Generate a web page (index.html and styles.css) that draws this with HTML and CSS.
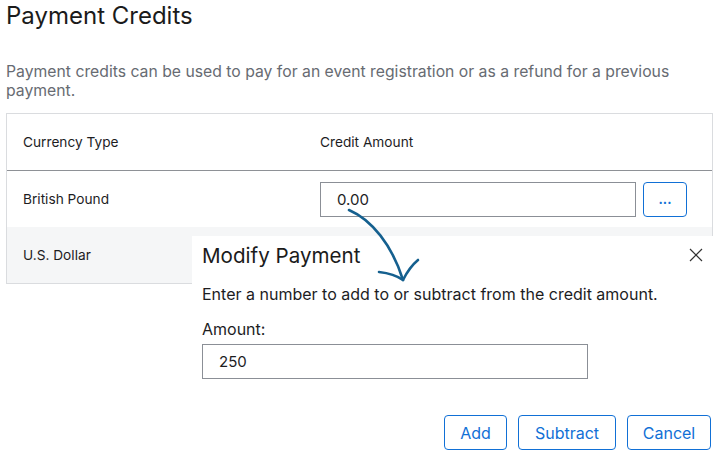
FILE: index.html
```html
<!DOCTYPE html>
<html>
<head>
<meta charset="utf-8">
<link rel="stylesheet" href="styles.css">
</head>
<body>
<div class="page">
  <h1 class="title">Payment Credits</h1>
  <p class="desc">Payment credits can be used to pay for an event registration or as a refund for a previous payment.</p>
  <div class="table">
    <div class="row head">
      <div class="c1">Currency Type</div>
      <div class="c2">Credit Amount</div>
    </div>
    <div class="row">
      <div class="c1">British Pound</div>
      <div class="c2 amount">
        <div class="field">0.00</div>
        <button class="dots">...</button>
      </div>
    </div>
    <div class="row alt">
      <div class="c1">U.S. Dollar</div>
      <div class="c2"></div>
    </div>
  </div>
</div>

<div class="modal">
  <div class="modal-head">
    <span class="modal-title">Modify Payment</span>
    <svg class="close" width="14" height="14" viewBox="0 0 14 14"><path d="M1 1L13 13M13 1L1 13" stroke="#333" stroke-width="1.2" fill="none"/></svg>
  </div>
  <p class="modal-text">Enter a number to add to or subtract from the credit amount.</p>
  <label class="label">Amount:</label>
  <div class="field modal-field">250</div>
  <div class="actions">
    <button class="btn btn-add">Add</button>
    <button class="btn btn-sub">Subtract</button>
    <button class="btn btn-cancel">Cancel</button>
  </div>
</div>

<svg class="arrow" width="720" height="461" viewBox="0 0 720 461">
  <path d="M349 210 C 372 220, 392 245, 403 280" stroke="#15608f" stroke-width="2.6" fill="none" stroke-linecap="round"/>
  <path d="M379 272 C 388 273, 396 275, 403 280 C 407 272, 412 265, 418 260" stroke="#15608f" stroke-width="2.6" fill="none" stroke-linecap="round" stroke-linejoin="round"/>
</svg>
</body>
</html>
```

FILE: styles.css
```css
* { box-sizing: border-box; }
html, body { margin: 0; padding: 0; background: #fff; }
body {
  font-family: Inter, "Noto Sans", sans-serif;
  color: #1d1d1f;
  width: 720px;
  height: 461px;
  overflow: hidden;
  position: relative;
}
.page { padding: 0 7px 0 6px; }
.title {
  margin: 0;
  padding-top: 2px;
  font-size: 24px;
  font-weight: 400;
  line-height: 28px;
  color: #1b1b1b;
}
.desc {
  margin: 32px 0 0;
  font-size: 15.75px;
  line-height: 19px;
  color: #676b72;
}
.table {
  margin-top: 13px;
  border: 1px solid #dadcdf;
}
.row {
  display: flex;
  align-items: center;
  height: 56px;
  font-size: 13.7px;
  color: #1d1d1f;
}
.row.head { height: 57px; border-bottom: 1px solid #8e9196; }
.row.alt { background: #f5f6f7; height: 56px; }
.c1 { width: 313px; padding-left: 16px; }
.c2 { flex: 1; }
.amount { display: flex; gap: 7px; align-items: center; }
.field {
  border: 1px solid #8b8f96;
  height: 35px;
  display: flex;
  align-items: center;
  padding-left: 16px;
  font-size: 15px;
  color: #1d1d1f;
  background: #fff;
}
.amount .field { width: 316px; }
.dots {
  width: 44px;
  height: 35px;
  border: 1px solid #1170d6;
  border-radius: 4px;
  background: #fff;
  color: #1170d6;
  font-family: inherit;
  font-size: 13px;
  font-weight: 700;
  padding: 0;
}
.modal {
  position: absolute;
  left: 192px;
  top: 236px;
  right: 0;
  bottom: 0;
  background: #fff;
  padding: 0 9px 0 10px;
}
.modal-head {
  height: 38px;
  display: flex;
  align-items: center;
  justify-content: space-between;
}
.modal-title { font-size: 20.6px; color: #1b1b1b; }
.close { margin-right: 8px; }
.modal-text {
  margin: 10px 0 0;
  font-size: 16px;
  line-height: 20px;
  color: #1d1d1f;
}
.label {
  display: block;
  margin-top: 15px;
  font-size: 16px;
  line-height: 20px;
  color: #1d1d1f;
}
.modal-field {
  margin-top: 5px;
  width: 386px;
  height: 35px;
}
.actions {
  display: flex;
  justify-content: flex-end;
  gap: 11px;
  margin-top: 36px;
}
.btn {
  height: 35px;
  border: 1px solid #1170d6;
  border-radius: 4px;
  background: #fff;
  color: #1170d6;
  font-family: inherit;
  font-size: 16px;
  padding: 0;
}
.btn-add { width: 63px; }
.btn-sub { width: 98px; }
.btn-cancel { width: 84px; }
.arrow {
  position: absolute;
  left: 0;
  top: 0;
  pointer-events: none;
}
```
